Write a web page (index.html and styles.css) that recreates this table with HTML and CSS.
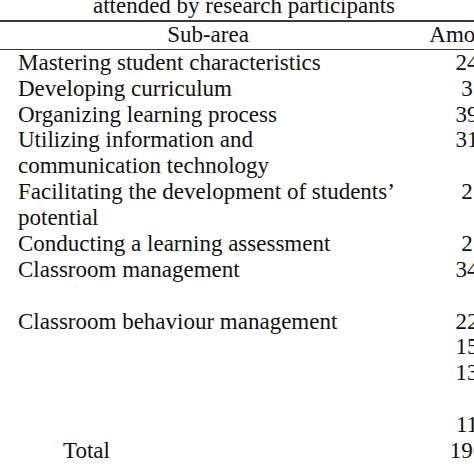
FILE: index.html
```html
<!DOCTYPE html>
<html lang="en">
<head>
<meta charset="utf-8">
<title>Sub-area table</title>
<link rel="stylesheet" href="styles.css">
</head>
<body>
<div class="page">
  <div class="caption">attended by research participants</div>
  <table class="data">
    <thead>
      <tr>
        <th class="area-head">Sub-area</th>
        <th class="amt-head">Amount</th>
      </tr>
    </thead>
    <tbody>
      <tr><td class="area">Mastering student characteristics</td><td class="amt">24</td></tr>
      <tr><td class="area">Developing curriculum</td><td class="amt">3</td></tr>
      <tr><td class="area">Organizing learning process</td><td class="amt">39</td></tr>
      <tr><td class="area">Utilizing information and<br>communication technology</td><td class="amt">31</td></tr>
      <tr><td class="area">Facilitating the development of students’<br>potential</td><td class="amt">2</td></tr>
      <tr><td class="area">Conducting a learning assessment</td><td class="amt">2</td></tr>
      <tr><td class="area">Classroom management<br>&nbsp;</td><td class="amt">34</td></tr>
      <tr><td class="area">Classroom behaviour management</td><td class="amt">22</td></tr>
      <tr><td class="area"></td><td class="amt">15</td></tr>
      <tr><td class="area">&nbsp;<br>&nbsp;</td><td class="amt">13</td></tr>
      <tr><td class="area"></td><td class="amt">11</td></tr>
      <tr class="total"><td class="area total-label">Total</td><td class="amt">196</td></tr>
    </tbody>
  </table>
</div>
</body>
</html>
```
FILE: styles.css
```css
html, body {
  margin: 0;
  padding: 0;
  background: #ffffff;
}

body {
  width: 474px;
  height: 474px;
  overflow: hidden;
  font-family: "Liberation Serif", "Times New Roman", serif;
  font-size: 23px;
  line-height: 25.87px;
  color: #111111;
}

.page {
  width: 600px;
}

.caption {
  width: 488px;
  text-align: center;
  margin-top: -7px;
  margin-bottom: 1px;
  white-space: nowrap;
}

.data {
  border-collapse: collapse;
  width: 518px;
  table-layout: fixed;
}

.data th,
.data td {
  padding: 0;
  font-weight: normal;
  vertical-align: top;
  white-space: nowrap;
}

.data thead tr {
  border-top: 2px solid #3a3a3a;
  border-bottom: 1px solid #3a3a3a;
}

.data thead th {
  padding-bottom: 1px;
}

.area-head {
  width: 416px;
  text-align: center;
}

.amt-head {
  width: 102px;
  text-align: center;
}

.area {
  padding-left: 18px !important;
  text-align: left;
}

.amt {
  text-align: center;
}

.total-label {
  padding-left: 63px !important;
}
```
